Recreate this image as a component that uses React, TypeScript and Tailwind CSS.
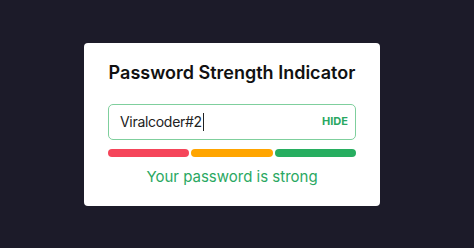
export default function App() {
  return (
    <div className="min-h-screen w-full flex items-center justify-center bg-[#1c1b29] pr-[10px]" style={{ fontFamily: 'Inter, "Noto Sans", sans-serif' }}>
      <div className="w-[296px] bg-white rounded-[4px] px-6 pt-4 pb-[17px] flex flex-col">
        <h2 className="text-[18px] leading-7 font-semibold text-[#111] text-center">Password Strength Indicator</h2>
        <div className="mt-[17px] h-9 border border-[#7fcf9d] rounded-[5px] flex items-center pl-[11px] pr-[7px]">
          <span className="text-[14px] text-[#222] tracking-[-0.3px]">Viralcoder#2</span>
          <span className="w-px h-[18px] bg-[#222] ml-px"></span>
          <span className="ml-auto text-[11px] font-bold text-[#2aa862]">HIDE</span>
        </div>
        <div className="mt-[9px] flex gap-[2px]">
          <div className="flex-1 h-2 rounded-full bg-[#f5455a]"></div>
          <div className="flex-1 h-2 rounded-full bg-[#ffa500]"></div>
          <div className="flex-1 h-2 rounded-full bg-[#27ae60]"></div>
        </div>
        <p className="mt-2 text-[15px] leading-6 text-[#2aa862] text-center">Your password is strong</p>
      </div>
    </div>
  )
}
